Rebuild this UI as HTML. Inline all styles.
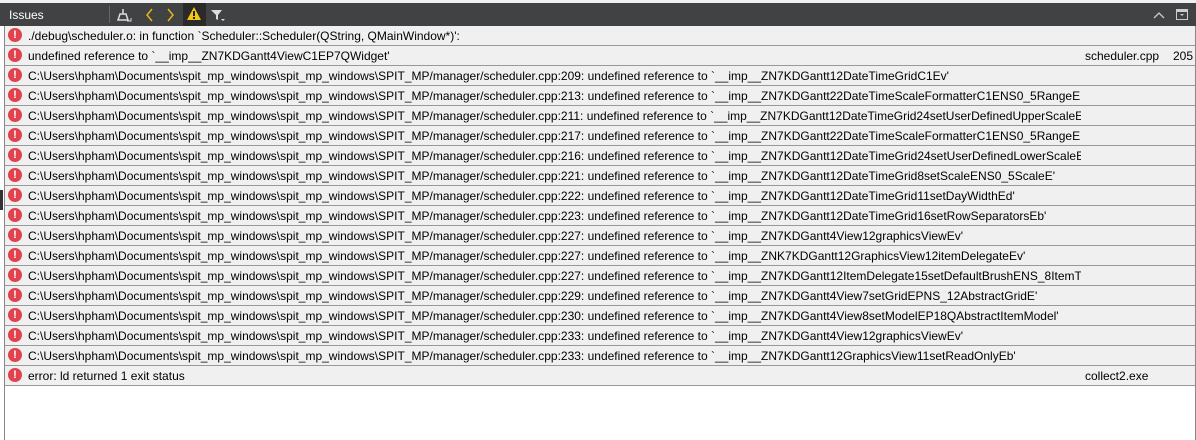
<!DOCTYPE html>
<html><head><style>
body{margin:0;width:1196px;height:440px;background:#fff;position:relative;overflow:hidden;font-family:"Liberation Sans",sans-serif;font-size:12px}
.top{position:absolute;left:0;top:0;width:1196px;height:3px;background:#f0f0f0}
.hdr{position:absolute;left:0;top:3px;width:1196px;height:23px;background:#404244;color:#fff}
.hdr .t{position:absolute;left:9px;top:5px;font-size:12px}
.list{position:absolute;left:4px;top:26px;width:1190px;border-left:1px solid #888;border-right:1px solid #888;height:414px}
.row{position:relative;height:19px;border-bottom:1px solid #999;background:#f0f0f0;color:#000;white-space:nowrap;overflow:hidden}
.row .ic{position:absolute;left:3px;top:2px;width:14px;height:14px;border-radius:50%;background:#e1434e;color:#fff;font-weight:bold;font-size:11px;text-align:center;line-height:14px}
.row .tx{position:absolute;left:23px;top:3px;width:1053px;overflow:hidden}
.row .f{position:absolute;left:1080px;top:3px}
.row .n{position:absolute;left:1168px;top:3px}
</style></head><body>
<div class="top"></div>
<div class="hdr"><span class="t">Issues</span>
<div style="position:absolute;left:109px;top:3px;width:1px;height:17px;background:#666"></div>
<svg style="position:absolute;left:116px;top:4px" width="16" height="16"><path d="M7 2v5M4 7h6l2 6H2z" fill="none" stroke="#ddd" stroke-width="1.5"/><path d="M11 14h4v-3" stroke="#ddd" fill="none"/></svg>
<svg style="position:absolute;left:143px;top:3px" width="12" height="18"><path d="M9 3l-5 6 5 6" fill="none" stroke="#e8b417" stroke-width="1.5"/></svg>
<svg style="position:absolute;left:165px;top:3px" width="12" height="18"><path d="M3 3l5 6-5 6" fill="none" stroke="#e8b417" stroke-width="1.5"/></svg>
<div style="position:absolute;left:183px;top:0;width:23px;height:23px;background:#2a2a2a"></div>
<svg style="position:absolute;left:186px;top:3px" width="16" height="16"><path d="M8 1L15 14H1z" fill="#f2c811"/><rect x="7" y="5" width="2" height="5" fill="#222"/><rect x="7" y="11" width="2" height="2" fill="#222"/></svg>
<svg style="position:absolute;left:210px;top:4px" width="16" height="16"><path d="M1 3h11L8 8v5L6 12V8z" fill="#ddd"/><path d="M11 12h4l-2 2z" fill="#ddd"/></svg>
<svg style="position:absolute;left:1152px;top:6px" width="14" height="12"><path d="M2 9l5-5 5 5" fill="none" stroke="#ccc" stroke-width="1.3"/></svg>
<svg style="position:absolute;left:1175px;top:5px" width="14" height="14"><rect x="1.5" y="1.5" width="11" height="10" fill="none" stroke="#ccc"/><rect x="2" y="2" width="10" height="2" fill="#ccc"/><path d="M5 6h4l-2 2z" fill="#ccc"/></svg>
</div>
<div style="position:absolute;left:0;top:190px;width:3px;height:20px;background:#333"></div>
<div class="list">
<div class="row"><span class="ic">!</span><span class="tx">./debug\scheduler.o: in function `Scheduler::Scheduler(QString, QMainWindow*)':</span></div>
<div class="row"><span class="ic">!</span><span class="tx">undefined reference to `__imp__ZN7KDGantt4ViewC1EP7QWidget'</span><span class="f">scheduler.cpp</span><span class="n">205</span></div>
<div class="row"><span class="ic">!</span><span class="tx">C:\Users\hpham\Documents\spit_mp_windows\spit_mp_windows\SPIT_MP/manager/scheduler.cpp:209: undefined reference to `__imp__ZN7KDGantt12DateTimeGridC1Ev'</span></div>
<div class="row"><span class="ic">!</span><span class="tx">C:\Users\hpham\Documents\spit_mp_windows\spit_mp_windows\SPIT_MP/manager/scheduler.cpp:213: undefined reference to `__imp__ZN7KDGantt22DateTimeScaleFormatterC1ENS0_5RangeERK7QString'</span></div>
<div class="row"><span class="ic">!</span><span class="tx">C:\Users\hpham\Documents\spit_mp_windows\spit_mp_windows\SPIT_MP/manager/scheduler.cpp:211: undefined reference to `__imp__ZN7KDGantt12DateTimeGrid24setUserDefinedUpperScaleEPNS0_'</span></div>
<div class="row"><span class="ic">!</span><span class="tx">C:\Users\hpham\Documents\spit_mp_windows\spit_mp_windows\SPIT_MP/manager/scheduler.cpp:217: undefined reference to `__imp__ZN7KDGantt22DateTimeScaleFormatterC1ENS0_5RangeERK7QString'</span></div>
<div class="row"><span class="ic">!</span><span class="tx">C:\Users\hpham\Documents\spit_mp_windows\spit_mp_windows\SPIT_MP/manager/scheduler.cpp:216: undefined reference to `__imp__ZN7KDGantt12DateTimeGrid24setUserDefinedLowerScaleEPNS0_'</span></div>
<div class="row"><span class="ic">!</span><span class="tx">C:\Users\hpham\Documents\spit_mp_windows\spit_mp_windows\SPIT_MP/manager/scheduler.cpp:221: undefined reference to `__imp__ZN7KDGantt12DateTimeGrid8setScaleENS0_5ScaleE'</span></div>
<div class="row"><span class="ic">!</span><span class="tx">C:\Users\hpham\Documents\spit_mp_windows\spit_mp_windows\SPIT_MP/manager/scheduler.cpp:222: undefined reference to `__imp__ZN7KDGantt12DateTimeGrid11setDayWidthEd'</span></div>
<div class="row"><span class="ic">!</span><span class="tx">C:\Users\hpham\Documents\spit_mp_windows\spit_mp_windows\SPIT_MP/manager/scheduler.cpp:223: undefined reference to `__imp__ZN7KDGantt12DateTimeGrid16setRowSeparatorsEb'</span></div>
<div class="row"><span class="ic">!</span><span class="tx">C:\Users\hpham\Documents\spit_mp_windows\spit_mp_windows\SPIT_MP/manager/scheduler.cpp:227: undefined reference to `__imp__ZN7KDGantt4View12graphicsViewEv'</span></div>
<div class="row"><span class="ic">!</span><span class="tx">C:\Users\hpham\Documents\spit_mp_windows\spit_mp_windows\SPIT_MP/manager/scheduler.cpp:227: undefined reference to `__imp__ZNK7KDGantt12GraphicsView12itemDelegateEv'</span></div>
<div class="row"><span class="ic">!</span><span class="tx">C:\Users\hpham\Documents\spit_mp_windows\spit_mp_windows\SPIT_MP/manager/scheduler.cpp:227: undefined reference to `__imp__ZN7KDGantt12ItemDelegate15setDefaultBrushENS_8ItemTypeERK6QBrush'</span></div>
<div class="row"><span class="ic">!</span><span class="tx">C:\Users\hpham\Documents\spit_mp_windows\spit_mp_windows\SPIT_MP/manager/scheduler.cpp:229: undefined reference to `__imp__ZN7KDGantt4View7setGridEPNS_12AbstractGridE'</span></div>
<div class="row"><span class="ic">!</span><span class="tx">C:\Users\hpham\Documents\spit_mp_windows\spit_mp_windows\SPIT_MP/manager/scheduler.cpp:230: undefined reference to `__imp__ZN7KDGantt4View8setModelEP18QAbstractItemModel'</span></div>
<div class="row"><span class="ic">!</span><span class="tx">C:\Users\hpham\Documents\spit_mp_windows\spit_mp_windows\SPIT_MP/manager/scheduler.cpp:233: undefined reference to `__imp__ZN7KDGantt4View12graphicsViewEv'</span></div>
<div class="row"><span class="ic">!</span><span class="tx">C:\Users\hpham\Documents\spit_mp_windows\spit_mp_windows\SPIT_MP/manager/scheduler.cpp:233: undefined reference to `__imp__ZN7KDGantt12GraphicsView11setReadOnlyEb'</span></div>
<div class="row"><span class="ic">!</span><span class="tx">error: ld returned 1 exit status</span><span class="f">collect2.exe</span></div>
</div>
</body></html>
